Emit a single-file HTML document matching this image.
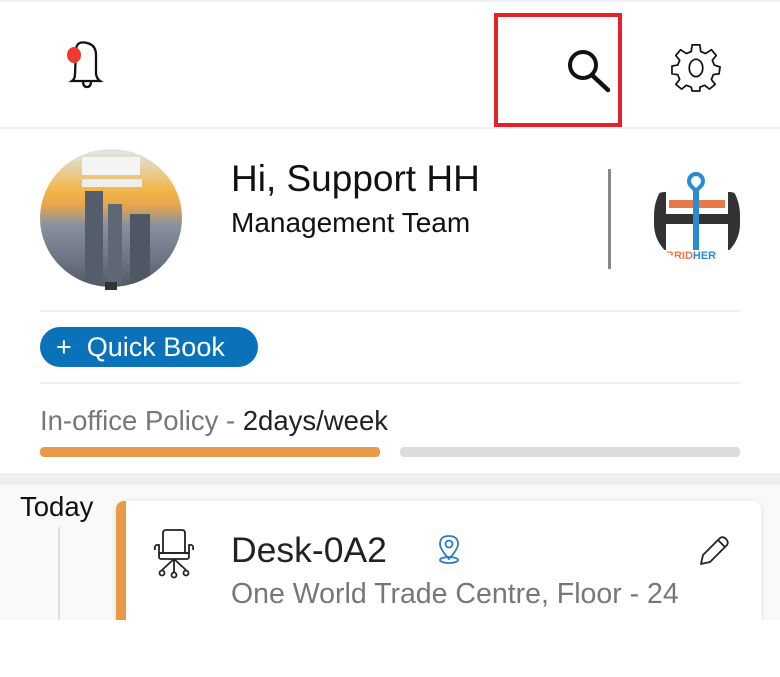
<!DOCTYPE html>
<html><head><meta charset="utf-8"><style>
*{margin:0;padding:0;box-sizing:border-box}
body{width:780px;height:677px;background:#fff;font-family:"Liberation Sans",sans-serif;position:relative;overflow:hidden}
.a{position:absolute;white-space:nowrap}
</style></head><body>
<div class="a" style="left:0;top:0;width:780px;height:2px;background:#f2f2f2"></div>
<!-- bell -->
<svg class="a" style="left:62px;top:40px" width="50" height="54" viewBox="0 0 50 54">
<path d="M14 11 Q14 0 25 3 Q34 5 34 15 L34 34 Q35 39 38 41 L10 41 Q13 39 13 34 Z" fill="none" stroke="#111" stroke-width="2.3"/>
<path d="M21 41 Q21 47 25 47 Q29 47 29 41" fill="none" stroke="#111" stroke-width="2.3"/>
<ellipse cx="12" cy="15" rx="7" ry="8" fill="#f0392e"/>
</svg>
<!-- red box -->
<div class="a" style="left:494px;top:13px;width:128px;height:114px;border:4px solid #e8202a"></div>
<svg class="a" style="left:564px;top:46px" width="50" height="50" viewBox="0 0 50 50">
<circle cx="19" cy="19" r="13" fill="none" stroke="#111" stroke-width="4"/>
<line x1="29" y1="30" x2="44" y2="44" stroke="#111" stroke-width="4.5" stroke-linecap="round"/>
</svg>
<!-- gear -->
<svg class="a" style="left:670px;top:42px" width="52" height="50" viewBox="-26 -26 52 52">
<g fill="none" stroke="#111" stroke-width="1.8">
<path d="M-4,-23 L4,-23 L5,-16 L10,-14 L16,-18 L21,-12 L17,-7 L19,-2 L25,0 L24,7 L18,8 L16,13 L20,18 L14,23 L9,19 L4,21 L4,25 L-4,25 L-5,21 L-10,19 L-15,23 L-21,18 L-17,13 L-19,8 L-25,7 L-25,-1 L-19,-2 L-17,-7 L-21,-12 L-16,-18 L-10,-14 L-5,-16 Z" stroke-linejoin="round"/>
<ellipse cx="0" cy="1" rx="7" ry="9"/>
</g></svg>
<div class="a" style="left:0;top:127px;width:780px;height:2px;background:#f0f0f0"></div>
<!-- avatar -->
<div class="a" style="left:40px;top:149px;width:142px;height:138px;border-radius:50%;overflow:hidden;background:linear-gradient(#dfe6ee 0%,#f2b64a 30%,#e9a74a 40%,#8891a0 55%,#6d7482 80%,#525a66 100%)">
<div class="a" style="left:42px;top:8px;width:58px;height:18px;background:#f4f4f4"></div>
<div class="a" style="left:42px;top:30px;width:60px;height:8px;background:#eee"></div>
<div class="a" style="left:45px;top:42px;width:18px;height:90px;background:#535d6c"></div>
<div class="a" style="left:68px;top:55px;width:14px;height:80px;background:#5f6775"></div>
<div class="a" style="left:90px;top:65px;width:20px;height:70px;background:#4f5764"></div>
</div>
<div class="a" style="left:105px;top:282px;width:12px;height:8px;background:#333"></div>
<div class="a" style="left:231px;top:158px;font-size:37px;color:#111">Hi, Support HH</div>
<div class="a" style="left:231px;top:207px;font-size:28px;color:#111">Management Team</div>
<div class="a" style="left:608px;top:169px;width:3px;height:100px;background:#888"></div>
<!-- logo -->
<div class="a" style="left:654px;top:170px;width:86px;height:90px;border-radius:50% 50% 40% 40%;overflow:hidden">
<div class="a" style="left:0;top:22px;width:12px;height:58px;background:#333;border-radius:10px 0 0 10px"></div>
<div class="a" style="left:74px;top:22px;width:12px;height:58px;background:#333;border-radius:0 10px 10px 0"></div>
<div class="a" style="left:12px;top:44px;width:62px;height:10px;background:#333"></div>
<div class="a" style="left:15px;top:30px;width:56px;height:8px;background:#e8784a"></div>
<div class="a" style="left:39px;top:18px;width:6px;height:62px;background:#2a8ccf"></div>
<div class="a" style="left:33px;top:2px;width:18px;height:18px;border:4px solid #2a8ccf;border-radius:50% 50% 50% 0;transform:rotate(-45deg)"></div>
<div class="a" style="left:12px;top:80px;font-size:11px;color:#e8784a;font-weight:bold">BRID<span style="color:#2a8ccf">HER</span></div>
</div>
<div class="a" style="left:40px;top:310px;width:700px;height:2px;background:#f0f0f0"></div>
<div class="a" style="left:40px;top:327px;width:218px;height:40px;border-radius:20px;background:#0a72b8;color:#fff;font-size:27px;line-height:40px;padding-left:16px">+&nbsp;&nbsp;Quick Book</div>
<div class="a" style="left:40px;top:382px;width:700px;height:2px;background:#f0f0f0"></div>
<div class="a" style="left:40px;top:405px;font-size:27.5px;color:#777">In-office Policy - <span style="color:#222">2days/week</span></div>
<div class="a" style="left:40px;top:447px;width:340px;height:10px;border-radius:4px;background:#e89a48"></div>
<div class="a" style="left:400px;top:447px;width:340px;height:10px;border-radius:4px;background:#dcdcdc"></div>
<div class="a" style="left:0;top:473px;width:780px;height:12px;background:#efefef"></div>
<div class="a" style="left:0;top:485px;width:780px;height:135px;background:#f9f9f9"></div>
<div class="a" style="left:20px;top:491px;font-size:27.5px;color:#111">Today</div>
<div class="a" style="left:58px;top:527px;width:2px;height:93px;background:#ddd"></div>
<div class="a" style="left:116px;top:501px;width:645px;height:119px;background:#fff;border-radius:8px 8px 0 0;box-shadow:0 1px 6px rgba(0,0,0,.12);overflow:hidden">
<div class="a" style="left:0;top:0;width:10px;height:119px;background:#e89a48"></div>
</div>
<!-- chair -->
<svg class="a" style="left:150px;top:528px" width="50" height="52" viewBox="0 0 50 52">
<g fill="none" stroke="#222" stroke-width="1.8">
<path d="M13 26 L13 5 Q13 2 16 2 L32 2 Q35 2 35 5 L35 26"/>
<path d="M5 22 Q4 16 9 17 L9 25 L39 25 L39 17 Q44 16 43 22"/>
<rect x="9" y="25" width="30" height="6" rx="2"/>
<path d="M24 31 L24 44 M24 31 L12 42 M24 31 L36 42"/>
<circle cx="12" cy="45" r="2.5"/><circle cx="24" cy="47" r="2.5"/><circle cx="36" cy="45" r="2.5"/>
</g></svg>
<div class="a" style="left:231px;top:530px;font-size:35.5px;color:#222">Desk-0A2</div>
<svg class="a" style="left:434px;top:534px" width="30" height="32" viewBox="0 0 30 32">
<g fill="none" stroke="#2a7cc7" stroke-width="1.8">
<path d="M15 25 Q6 15 6 10 Q6 2 15 2 Q24 2 24 10 Q24 15 15 25 Z"/><circle cx="15" cy="10" r="3.5"/>
<ellipse cx="15" cy="26" rx="9" ry="3"/></g></svg>
<svg class="a" style="left:696px;top:534px" width="36" height="36" viewBox="0 0 36 36">
<path d="M5 30 L7 21 L24 4 Q27 2 30 5 Q33 8 31 11 L14 28 Z M22 6 L29 13" fill="none" stroke="#222" stroke-width="1.8" stroke-linejoin="round"/></svg>
<div class="a" style="left:231px;top:578px;font-size:28.5px;color:#777">One World Trade Centre, Floor - 24</div>
<div class="a" style="left:0;top:620px;width:780px;height:57px;background:#fff"></div>
</body></html>
